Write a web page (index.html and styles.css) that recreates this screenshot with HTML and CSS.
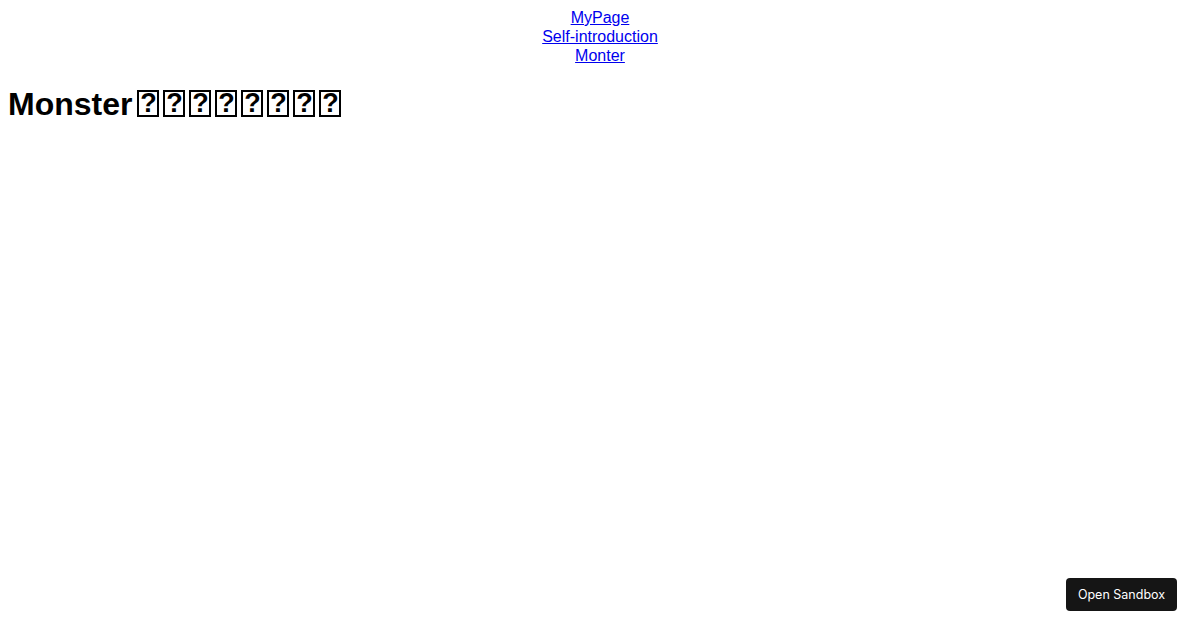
FILE: index.html
```html
<!DOCTYPE html>
<html lang="ja">
<head>
<meta charset="utf-8">
<title>Monster</title>
<link rel="stylesheet" href="styles.css">
</head>
<body>
<nav class="nav">
  <a href="#" class="nav-link">MyPage</a>
  <a href="#" class="nav-link">Self-introduction</a>
  <a href="#" class="nav-link">Monter</a>
</nav>
<h1 class="title">Monster<span class="tofu">?</span><span class="tofu">?</span><span class="tofu">?</span><span class="tofu">?</span><span class="tofu">?</span><span class="tofu">?</span><span class="tofu">?</span><span class="tofu">?</span></h1>
<a href="#" class="sandbox-btn">Open Sandbox</a>
</body>
</html>
```

FILE: styles.css
```css
body {
  margin: 8px;
  font-family: "Liberation Sans", Arial, sans-serif;
  font-size: 16px;
  background: #fff;
  color: #000;
}
.nav {
  display: flex;
  flex-direction: column;
  align-items: center;
  line-height: 19px;
}
.nav-link {
  color: #0000ee;
  text-decoration: underline;
}
.title {
  font-size: 32px;
  font-weight: bold;
  margin: 21.44px 0;
  line-height: 37px;
}
.tofu {
  display: inline-flex;
  align-items: center;
  justify-content: center;
  box-sizing: border-box;
  width: 22px;
  height: 27px;
  margin: 3.5px 2px 0 2px;
  border: 2px solid #000;
  font-size: 27px;
  line-height: 23px;
  vertical-align: top;
}
.tofu:first-of-type {
  margin-left: 5px;
}
.sandbox-btn {
  position: fixed;
  right: 23px;
  bottom: 19px;
  width: 111px;
  height: 33px;
  display: flex;
  align-items: center;
  justify-content: center;
  background: #151515;
  color: #fff;
  border-radius: 4px;
  font-family: Inter, "Liberation Sans", sans-serif;
  font-size: 12.5px;
  text-decoration: none;
  box-sizing: border-box;
}
```
